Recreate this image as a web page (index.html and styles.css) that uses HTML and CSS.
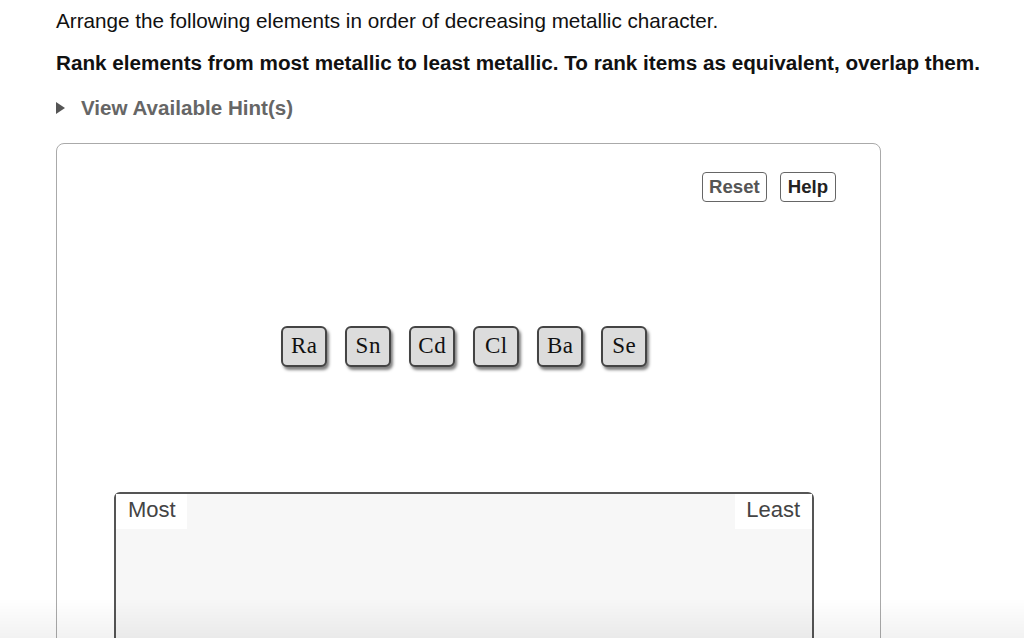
FILE: index.html
```html
<!DOCTYPE html>
<html>
<head>
<meta charset="utf-8">
<link rel="stylesheet" href="styles.css">
</head>
<body>
<div class="page">
  <p class="intro">Arrange the following elements in order of decreasing metallic character.</p>
  <p class="instr">Rank elements from most metallic to least metallic. To rank items as equivalent, overlap them.</p>
  <div class="hint"><span class="tri"></span><span class="hint-text">View Available Hint(s)</span></div>
  <div class="panel">
    <div class="toolbar">
      <span class="btn reset">Reset</span>
      <span class="btn help">Help</span>
    </div>
    <div class="tiles">
      <span class="tile">Ra</span>
      <span class="tile">Sn</span>
      <span class="tile">Cd</span>
      <span class="tile">Cl</span>
      <span class="tile">Ba</span>
      <span class="tile">Se</span>
    </div>
    <div class="rank">
      <span class="lab">Most</span>
      <span class="lab least">Least</span>
    </div>
  </div>
</div>
<div class="fade"></div>
</body>
</html>
```
FILE: styles.css
```css
html, body {
  margin: 0;
  padding: 0;
  background: #fff;
  overflow: hidden;
}
.page {
  padding: 9px 0 0 56px;
  font-family: "Liberation Sans", Arial, sans-serif;
  color: #111;
}
.intro {
  margin: 0;
  font-size: 20.7px;
  line-height: 24px;
}
.instr {
  margin: 18px 0 0;
  font-size: 20.7px;
  line-height: 24px;
  font-weight: bold;
}
.hint {
  margin-top: 22px;
  display: flex;
  align-items: center;
  height: 22px;
}
.tri {
  width: 0;
  height: 0;
  border-left: 9px solid #555;
  border-top: 6px solid transparent;
  border-bottom: 6px solid transparent;
  margin-right: 16px;
}
.hint-text {
  font-size: 20.6px;
  font-weight: bold;
  color: #666;
}
.panel {
  margin-top: 24px;
  width: 825px;
  height: 520px;
  border: 1.5px solid #aaa;
  border-radius: 8px;
  box-sizing: border-box;
}
.toolbar {
  display: flex;
  justify-content: flex-end;
  gap: 13px;
  padding: 28px 44px 0 0;
}
.btn {
  display: inline-block;
  box-sizing: border-box;
  height: 30px;
  line-height: 27px;
  padding: 0 6px;
  border: 1.5px solid #666;
  border-radius: 4px;
  font-size: 18.6px;
  font-weight: bold;
  color: #555;
}
.btn.help {
  color: #222;
  padding: 0 7px;
}
.tiles {
  display: flex;
  gap: 18px;
  padding: 124px 0 0 224px;
}
.tile {
  box-sizing: border-box;
  width: 46px;
  height: 41px;
  background: #dcdcdc;
  border: 2.5px solid #444;
  border-radius: 6px;
  box-shadow: 2px 3px 3px rgba(0,0,0,0.5);
  font-family: "Liberation Serif", "Times New Roman", serif;
  font-size: 23px;
  letter-spacing: 0.5px;
  text-indent: 0.5px;
  line-height: 36px;
  text-align: center;
  color: #111;
}
.rank {
  margin: 125px 0 0 57px;
  width: 700px;
  height: 200px;
  box-sizing: border-box;
  border: 2px solid #555;
  border-radius: 6px;
  background: #f7f7f7;
  display: flex;
  justify-content: space-between;
}
.lab {
  background: #fff;
  font-size: 22px;
  color: #444;
  line-height: 31px;
  padding: 0 11px 4px 12px;
  height: 35px;
  box-sizing: border-box;
}
.lab.least {
  padding: 0 12px 4px 11px;
}
.fade {
  position: fixed;
  left: 0;
  right: 0;
  bottom: 0;
  height: 40px;
  background: linear-gradient(to bottom, rgba(0,0,0,0), rgba(0,0,0,0.05));
  pointer-events: none;
}
```
